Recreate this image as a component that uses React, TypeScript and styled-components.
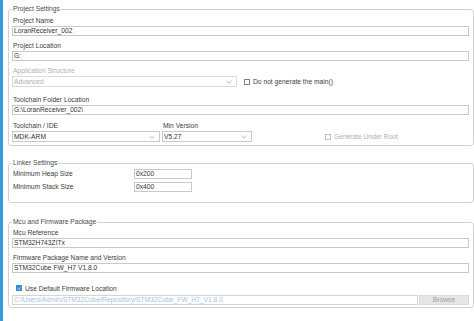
import styled, { createGlobalStyle } from 'styled-components';

const GlobalStyle = createGlobalStyle`
  html, body { margin: 0; padding: 0; background: #fff; }
  body {
    font-family: 'Liberation Sans', Arial, sans-serif;
    font-size: 6.7px;
    color: #3c3c3c;
  }
`;

const Page = styled.div`
  display: flex;
  width: 474px;
  height: 321px;
  overflow: hidden;
  background: #fff;
`;

const SideStrip = styled.div`
  width: 3px;
  flex-shrink: 0;
  background: #3a9ade;
`;

const Content = styled.div`
  flex: 1;
  display: flex;
  flex-direction: column;
  padding: 5px 0 0 5px;
`;

const Group = styled.fieldset<{ $mt?: number; $pb?: number }>`
  margin: ${(p) => p.$mt ?? 0}px 0 0;
  padding: 0 4px ${(p) => p.$pb ?? 3}px 3px;
  border: 1px solid #d2d2d2;
  border-radius: 3px;
  min-width: 0;
`;

const Legend = styled.legend`
  padding: 0 1px;
  height: 8px;
  line-height: 8px;
  color: #4a4a4a;
`;

const Field = styled.div<{ $mt?: number }>`
  margin-top: ${(p) => p.$mt ?? 0}px;
`;

const Label = styled.div<{ $disabled?: boolean }>`
  height: 8px;
  line-height: 8px;
  padding-left: 1px;
  white-space: nowrap;
  color: ${(p) => (p.$disabled ? '#b0b0b0' : '#3c3c3c')};
`;

const TextBox = styled.div<{ $disabled?: boolean }>`
  box-sizing: border-box;
  flex: 1;
  height: 10px;
  margin-top: 1px;
  padding: 0 0 0 1px;
  border: 1px solid ${(p) => (p.$disabled ? '#d4d4d4' : '#c9c9c9')};
  background: #fff;
  line-height: 8px;
  white-space: nowrap;
  overflow: hidden;
  color: ${(p) => (p.$disabled ? '#a9bfdc' : '#333')};
`;

const SelectBox = styled.div<{ $disabled?: boolean }>`
  box-sizing: border-box;
  display: flex;
  align-items: center;
  justify-content: space-between;
  height: 11px;
  margin-top: 1px;
  padding: 0 4px 0 1px;
  border: 1px solid ${(p) => (p.$disabled ? '#dadada' : '#c9c9c9')};
  color: ${(p) => (p.$disabled ? '#b0b0b0' : '#333')};
  background: #fff;
`;

const Chevron = () => (
  <svg width="6" height="4" viewBox="0 0 6 4">
    <polyline points="0.5,0.8 3,3.2 5.5,0.8" fill="none" stroke="#a0a0a0" strokeWidth="0.8" />
  </svg>
);

const Select = ({ value, disabled }: { value: string; disabled?: boolean }) => (
  <SelectBox $disabled={disabled}>
    <span>{value}</span>
    <Chevron />
  </SelectBox>
);

const Row = styled.div<{ $cols: string; $gap?: number }>`
  display: grid;
  grid-template-columns: ${(p) => p.$cols};
  column-gap: ${(p) => p.$gap ?? 0}px;
  align-items: end;
`;

const Check = styled.label<{ $disabled?: boolean; $ml?: number }>`
  display: flex;
  align-items: center;
  gap: 3px;
  height: 11px;
  margin-left: ${(p) => p.$ml ?? 0}px;
  white-space: nowrap;
  color: ${(p) => (p.$disabled ? '#b0b0b0' : '#3c3c3c')};
`;

const Box = styled.span<{ $checked?: boolean; $disabled?: boolean }>`
  box-sizing: border-box;
  display: inline-flex;
  align-items: center;
  justify-content: center;
  width: 6px;
  height: 6px;
  border: 1px solid ${(p) => (p.$checked ? '#3a8bd6' : p.$disabled ? '#c0c0c0' : '#808080')};
  background: ${(p) => (p.$checked ? '#3a8bd6' : '#fff')};
`;

const Tick = () => (
  <svg width="5" height="5" viewBox="0 0 5 5">
    <polyline points="0.8,2.6 2,3.8 4.2,1" fill="none" stroke="#fff" strokeWidth="0.9" />
  </svg>
);

const LinkerGrid = styled.div`
  display: grid;
  grid-template-columns: 122px 58px;
  grid-auto-rows: 10px;
  row-gap: 3px;
  align-items: center;
  margin-top: 2px;
`;

const SmallBox = styled(TextBox)`
  margin: 0;
`;

const InputRow = styled.div`
  display: flex;
`;

const CheckLine = styled.div`
  display: flex;
  align-items: center;
  height: 8px;
  padding-left: 4px;
`;

const PathRow = styled.div`
  display: flex;
  gap: 1px;
  margin-top: 2px;
`;

const Browse = styled.button`
  box-sizing: border-box;
  width: 50px;
  height: 10px;
  margin-top: 1px;
  padding: 0;
  border: 1px solid #dadada;
  border-radius: 0;
  background: #e6e6e6;
  color: #9c9c9c;
  font-family: inherit;
  font-size: 6.7px;
  line-height: 8px;
`;

const Input = ({ value }: { value: string }) => (
  <InputRow>
    <TextBox>{value}</TextBox>
  </InputRow>
);

export default function App() {
  return (
    <>
      <GlobalStyle />
      <Page>
        <SideStrip />
        <Content>
          <Group>
            <Legend>Project Settings</Legend>
            <Field $mt={4}>
              <Label>Project Name</Label>
              <Input value="LoranReceiver_002" />
            </Field>
            <Field $mt={6}>
              <Label>Project Location</Label>
              <Input value="G:" />
            </Field>
            <Field $mt={6}>
              <Label $disabled>Application Structure</Label>
              <Row $cols="225px auto" $gap={7}>
                <Select value="Advanced" disabled />
                <Check>
                  <Box />
                  Do not generate the main()
                </Check>
              </Row>
            </Field>
            <Field $mt={9}>
              <Label>Toolchain Folder Location</Label>
              <Input value="G:\LoranReceiver_002\" />
            </Field>
            <Field $mt={7}>
              <Row $cols="148px 90px auto" $gap={2}>
                <div>
                  <Label>Toolchain / IDE</Label>
                  <Select value="MDK-ARM" />
                </div>
                <div>
                  <Label>Min Version</Label>
                  <Select value="V5.27" />
                </div>
                <Check $disabled $ml={71}>
                  <Box $disabled />
                  Generate Under Root
                </Check>
              </Row>
            </Field>
          </Group>

          <Group $mt={13} $pb={10}>
            <Legend>Linker Settings</Legend>
            <LinkerGrid>
              <Label>Minimum Heap Size</Label>
              <SmallBox>0x200</SmallBox>
              <Label>Minimum Stack Size</Label>
              <SmallBox>0x400</SmallBox>
            </LinkerGrid>
          </Group>

          <Group $mt={15} $pb={2}>
            <Legend>Mcu and Firmware Package</Legend>
            <Field $mt={3}>
              <Label>Mcu Reference</Label>
              <Input value="STM32H743ZITx" />
            </Field>
            <Field $mt={6}>
              <Label>Firmware Package Name and Version</Label>
              <Input value="STM32Cube FW_H7 V1.8.0" />
            </Field>
            <Field $mt={11}>
              <CheckLine>
                <Check>
                  <Box $checked>
                    <Tick />
                  </Box>
                  Use Default Firmware Location
                </Check>
              </CheckLine>
              <PathRow>
                <TextBox $disabled>C:/Users/Admin/STM32Cube/Repository/STM32Cube_FW_H7_V1.8.0</TextBox>
                <Browse disabled>Browse</Browse>
              </PathRow>
            </Field>
          </Group>
        </Content>
      </Page>
    </>
  );
}
